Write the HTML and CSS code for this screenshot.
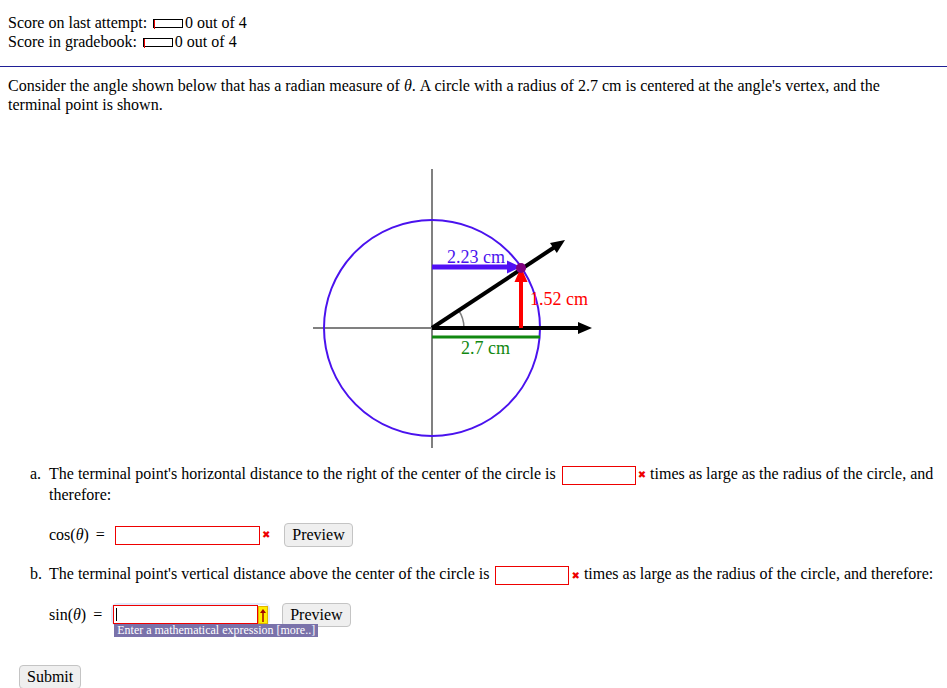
FILE: index.html
```html
<!DOCTYPE html>
<html>
<head>
<meta charset="utf-8">
<link rel="stylesheet" href="styles.css">
</head>
<body>
<div class="top">
  <div class="scores">
    <div>Score on last attempt: <span class="bar"><span class="fill"></span></span>0 out of 4</div>
    <div>Score in gradebook: <span class="bar"><span class="fill"></span></span>0 out of 4</div>
  </div>
</div>
<div class="rule"></div>
<div class="main">
<p class="intro">Consider the angle shown below that has a radian measure of <i>θ</i>. A circle with a radius of 2.7 cm is centered at the angle's vertex, and the terminal point is shown.</p>
<div class="figure">
<svg class="diagram" width="310" height="292" viewBox="0 0 310 292" xmlns="http://www.w3.org/2000/svg">
  <line x1="132" y1="9" x2="132" y2="288" stroke="#808080" stroke-width="2"/>
  <line x1="13" y1="168" x2="270" y2="168" stroke="#808080" stroke-width="2"/>
  <circle cx="132" cy="168" r="108" fill="none" stroke="#4a12ee" stroke-width="2"/>
  <line x1="132" y1="177" x2="240" y2="177" stroke="#118811" stroke-width="3"/>
  <path d="M164 168 A32 32 0 0 0 158.4 150" fill="none" stroke="#808080" stroke-width="1.5"/>
  <line x1="132" y1="168" x2="280" y2="168" stroke="#000" stroke-width="4"/>
  <polygon points="292,168 278,162 278,174" fill="#000"/>
  <line x1="132" y1="168" x2="254" y2="87.5" stroke="#000" stroke-width="4"/>
  <polygon points="265,80 256.8,92.9 250,82.9" fill="#000"/>
  <line x1="132" y1="107" x2="208" y2="107" stroke="#5010f5" stroke-width="5"/>
  <polygon points="221,107 207,100.5 207,113.5" fill="#5010f5"/>
  <line x1="221" y1="168" x2="221" y2="120" stroke="#ff0000" stroke-width="4"/>
  <polygon points="221,107 214.5,122 227.5,122" fill="#ff0000"/>
  <circle cx="221" cy="108" r="5" fill="#800080"/>
  <text x="147" y="103" class="lbl" fill="#4a12ee">2.23 cm</text>
  <text x="230" y="145" class="lbl" fill="#ff0000">1.52 cm</text>
  <text x="161" y="194" class="lbl" fill="#118811">2.7 cm</text>
</svg>
</div>
<ol class="parts">
  <li class="parta">The terminal point's horizontal distance to the right of the center of the circle is <input class="ans short" type="text"><span class="bad">✖</span> times as large as the radius of the circle, and therefore:
    <div class="eq">
      <span class="math cos">cos(<i>θ</i>) <span class="eqs">=</span></span>
      <input class="ans long" type="text"><span class="bad">✖</span>
      <button class="btn preview">Preview</button>
    </div>
  </li>
  <li class="partb">The terminal point's vertical distance above the center of the circle is <input class="ans short" type="text"><span class="bad">✖</span> times as large as the radius of the circle, and therefore:
    <div class="eq eq2">
      <span class="math sin">sin(<i>θ</i>) <span class="eqs">=</span></span>
      <span class="focuswrap">
        <span class="ans long fake"><span class="caret"></span></span><span class="warn"><svg width="8" height="14" viewBox="0 0 8 14"><line x1="4" y1="3" x2="4" y2="14" stroke="#a00000" stroke-width="1.5"/><polygon points="4,1 1,5 7,5" fill="#a00000"/></svg></span>
        <span class="tip">Enter a mathematical expression [more..]</span>
      </span>
      <button class="btn preview">Preview</button>
    </div>
  </li>
</ol>
<button class="btn submit">Submit</button>
</div>
</body>
</html>
```

FILE: styles.css
```css
html, body {
  background: #fff;
}
body {
  margin: 0;
  font-family: "Liberation Serif", "Times New Roman", serif;
  font-size: 16px;
  line-height: 19px;
  color: #000;
}
.top {
  padding: 13px 8px 0;
}
.bar {
  display: inline-block;
  width: 28px;
  height: 7px;
  border: 1px solid #000;
  margin-left: 2px;
  margin-right: 2px;
  position: relative;
}
.fill {
  position: absolute;
  left: 0;
  top: 0;
  width: 1px;
  height: 9px;
  background: #e00;
}
.rule {
  margin-top: 15px;
  height: 0;
  border-top: 1px solid #1f1f96;
}
.main {
  padding: 0 8px;
}
.intro {
  margin: 9px 0 0;
  max-width: 900px;
}
.figure {
  margin-top: 46px;
  height: 292px;
}
.diagram {
  display: block;
  margin-left: 292px;
}
.lbl {
  font-family: "Liberation Serif", "Times New Roman", serif;
  font-size: 18px;
}
.parts {
  margin: 12px 0 0;
  padding-left: 41px;
  list-style: none;
  line-height: 20px;
}
.parta::before,
.partb::before {
  display: inline-block;
  width: 19px;
  margin-left: -19px;
}
.parta::before {
  content: "a.";
}
.partb::before {
  content: "b.";
}
.parts li + li {
  margin-top: 17px;
}
.ans {
  box-sizing: border-box;
  border: 1px solid #e00;
  padding: 0;
  margin: 0;
  background: #fff;
  font: inherit;
  height: 19px;
  vertical-align: middle;
  border-radius: 0;
}
.short {
  width: 74px;
  margin-left: 2px;
}
.long {
  width: 145px;
}
.bad {
  color: #e00;
  font-family: "DejaVu Sans", sans-serif;
  font-size: 10px;
  margin-left: 2px;
  vertical-align: middle;
}
.eq {
  display: flex;
  align-items: center;
  height: 24px;
  margin-top: 18px;
}
.eq2 {
  margin-top: 17px;
}
.math {
  white-space: nowrap;
}
.math i {
  font-style: italic;
}
.eqs {
  margin-left: 3px;
}
.cos {
  margin-right: 10px;
}
.sin {
  margin-right: 11px;
}
.btn {
  font-family: "Liberation Serif", "Times New Roman", serif;
  font-size: 16px;
  color: #000;
  background: #efefef;
  border: 1px solid #c4c4c4;
  border-radius: 4px;
  padding: 0 7px;
  height: 24px;
  line-height: 20px;
}
.preview {
  margin-left: 14px;
}
.focuswrap {
  position: relative;
  display: flex;
  align-items: center;
  border-radius: 4px;
  box-shadow: 0 0 0 2px #e1e8fa;
}
.fake {
  display: flex;
  align-items: center;
  height: 19px;
}
.caret {
  display: block;
  width: 1px;
  height: 13px;
  background: #000;
  margin-left: 2px;
}
.warn {
  display: flex;
  align-items: center;
  justify-content: center;
  box-sizing: border-box;
  width: 10px;
  height: 18px;
  background: #ffee00;
  border: 1px solid #e0b400;
}
.tip {
  position: absolute;
  left: 1px;
  top: 19px;
  background: #7a72aa;
  color: #fff;
  font-size: 12px;
  line-height: 13px;
  padding: 0 3px;
  white-space: nowrap;
}
.submit {
  margin: 38px 0 0 11px;
  display: block;
}
```
